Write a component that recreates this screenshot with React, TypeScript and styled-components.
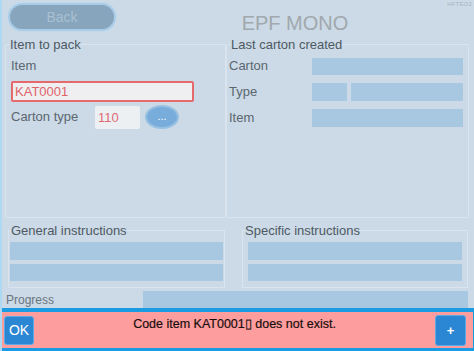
import styled, { createGlobalStyle } from 'styled-components';

const Global = createGlobalStyle`
  html, body {
    margin: 0;
    padding: 0;
    background: #cbdae6;
  }
  * {
    box-sizing: border-box;
  }
`;

const Page = styled.div`
  position: relative;
  width: 474px;
  height: 351px;
  display: flex;
  flex-direction: column;
  overflow: hidden;
  background: #cbdae6;
  border-left: 2px solid #addaf2;
  font-family: 'Liberation Sans', Arial, sans-serif;
  color: #56616b;
`;

const Header = styled.div`
  height: 37px;
  display: flex;
  align-items: flex-start;
  padding: 3px 0 0 6px;
`;

const BackButton = styled.button`
  width: 108px;
  height: 28px;
  border-radius: 14px;
  border: 2px solid #a9cde8;
  background: #87a5bc;
  color: #a9c0d2;
  font-family: inherit;
  font-size: 14px;
  padding: 0;
  box-shadow: 0 0 2px #b9daf0;
`;

const Title = styled.div`
  flex: 1;
  text-align: center;
  font-size: 20px;
  line-height: 20px;
  padding-top: 10px;
  color: #a1a8ae;
`;

const Tag = styled.div`
  position: absolute;
  top: 1px;
  right: 2px;
  font-size: 6px;
  color: #a9b6c2;
  letter-spacing: 0.2px;
`;

const TopRow = styled.div`
  height: 182px;
  display: flex;
  padding: 0 3px 0 3px;
`;

const Panel = styled.fieldset<{ $w: number }>`
  width: ${({ $w }) => $w}px;
  margin: 0;
  padding: 4px 5px 0 5px;
  border: 1px solid #d9e4ee;
  border-radius: 2px;
  min-width: 0;
`;

const Legend = styled.legend`
  padding: 0;
  margin-left: -1px;
  font-size: 13px;
  line-height: 15px;
  color: #4e5963;
`;

const Label = styled.div`
  font-size: 13px;
  line-height: 16px;
  color: #5b6670;
`;

const ItemInput = styled.div`
  width: 183px;
  height: 21px;
  margin-top: 7px;
  border: 2px solid #e46a6c;
  border-radius: 2px;
  background: #efeff1;
  color: #e0636a;
  font-size: 13px;
  line-height: 17px;
  padding-left: 2px;
`;

const CartonRow = styled.div`
  display: flex;
  align-items: center;
  margin-top: 4px;
  height: 23px;
`;

const CartonLabel = styled(Label)`
  width: 84px;
`;

const SmallInput = styled.div`
  width: 45px;
  height: 23px;
  border-radius: 2px;
  background: #edf0f3;
  color: #e06a72;
  font-size: 13px;
  line-height: 23px;
  padding-left: 3px;
`;

const DotsButton = styled.div`
  width: 34px;
  height: 24px;
  margin-left: 5px;
  border-radius: 50%;
  background: #78acda;
  border: 2px solid #98c0e2;
  color: #ffffff;
  font-size: 11px;
  line-height: 18px;
  text-align: center;
`;

const FieldRows = styled.div`
  display: flex;
  flex-direction: column;
  gap: 8px;
  padding-top: 2px;
`;

const FieldRow = styled.div`
  display: flex;
  align-items: center;
  gap: 4px;
`;

const FieldLabel = styled(Label)`
  width: 79px;
  margin-left: -3px;
`;

const Box = styled.div<{ $w?: number; $h?: number }>`
  ${({ $w }) => ($w ? `width: ${$w}px; flex: none;` : 'flex: 1 1 auto;')}
  height: ${({ $h }) => $h ?? 18}px;
  background: #a7c8e0;
`;

const InstrRow = styled.div`
  height: 70px;
  display: flex;
  gap: 17px;
  padding: 5px 0 0 6px;
`;

const InstrPanel = styled.fieldset<{ $w: number }>`
  width: ${({ $w }) => $w}px;
  margin: 0;
  padding: 4px 1px 4px 1px;
  border: 1px solid #d9e4ee;
  min-width: 0;
  display: flex;
  flex-direction: column;
  gap: 4px;
`;

const InstrBox = styled.div<{ $inset: number; $h: number }>`
  height: ${({ $h }) => $h}px;
  margin: 0 ${({ $inset }) => $inset}px;
  background: #a7c8e0;
`;

const InstrLegend = styled(Legend)`
  margin-left: 1px;
`;

const ProgressRow = styled.div`
  height: 20px;
  display: flex;
  align-items: flex-end;
  padding-left: 4px;
  padding-right: 6px;
`;

const ProgressLabel = styled.div`
  width: 137px;
  font-size: 12px;
  line-height: 16px;
  color: #69757f;
`;

const ProgressBar = styled.div`
  flex: 1;
  height: 17px;
  background: #a7c8e0;
`;

const MessageBar = styled.div`
  flex: 1;
  margin-left: -2px;
  display: grid;
  grid-template-columns: 30px 1fr 31px;
  align-items: start;
  padding: 4px 7px 2px 3px;
  background: #fd9d9d;
  border-top: 4px solid #1b9be2;
  border-bottom: 3px solid #1b9be2;
  border-left: 1px solid #1b9be2;
  border-right: 1px solid #1b9be2;
`;

const SquareButton = styled.div`
  width: 30px;
  height: 29px;
  border-radius: 3px;
  background: #2b87d4;
  border: 1px solid #5aa9e4;
  color: #ffffff;
  font-size: 14px;
  line-height: 27px;
  text-align: center;
`;

const PlusButton = styled(SquareButton)`
  width: 31px;
  height: 31px;
  font-size: 13px;
  font-weight: bold;
  line-height: 29px;
  margin-top: -1px;
`;

const Message = styled.div`
  text-align: center;
  font-size: 12.5px;
  line-height: 15px;
  color: #1a0d0d;
  padding-top: 1px;
  -webkit-text-stroke: 0.2px #1a0d0d;
`;

export default function App() {
  return (
    <Page>
      <Global />
      <Tag>HFTEO2</Tag>
      <Header>
        <BackButton>Back</BackButton>
        <Title>EPF MONO</Title>
      </Header>
      <TopRow>
        <Panel $w={221}>
          <Legend>Item to pack</Legend>
          <Label style={{ marginTop: 2 }}>Item</Label>
          <ItemInput>KAT0001</ItemInput>
          <CartonRow>
            <CartonLabel>Carton type</CartonLabel>
            <SmallInput>110</SmallInput>
            <DotsButton>...</DotsButton>
          </CartonRow>
        </Panel>
        <Panel $w={243}>
          <Legend>Last carton created</Legend>
          <FieldRows>
            <FieldRow>
              <FieldLabel>Carton</FieldLabel>
              <Box $h={17} />
            </FieldRow>
            <FieldRow>
              <FieldLabel>Type</FieldLabel>
              <Box $w={35} />
              <Box />
            </FieldRow>
            <FieldRow>
              <FieldLabel>Item</FieldLabel>
              <Box />
            </FieldRow>
          </FieldRows>
        </Panel>
      </TopRow>
      <InstrRow>
        <InstrPanel $w={217}>
          <InstrLegend>General instructions</InstrLegend>
          <InstrBox $inset={0} $h={18} />
          <InstrBox $inset={0} $h={17} />
        </InstrPanel>
        <InstrPanel $w={226}>
          <InstrLegend>Specific instructions</InstrLegend>
          <InstrBox $inset={4} $h={18} />
          <InstrBox $inset={4} $h={17} />
        </InstrPanel>
      </InstrRow>
      <ProgressRow>
        <ProgressLabel>Progress</ProgressLabel>
        <ProgressBar />
      </ProgressRow>
      <MessageBar>
        <SquareButton>OK</SquareButton>
        <Message>Code item KAT0001▯ does not exist.</Message>
        <PlusButton>+</PlusButton>
      </MessageBar>
    </Page>
  );
}
